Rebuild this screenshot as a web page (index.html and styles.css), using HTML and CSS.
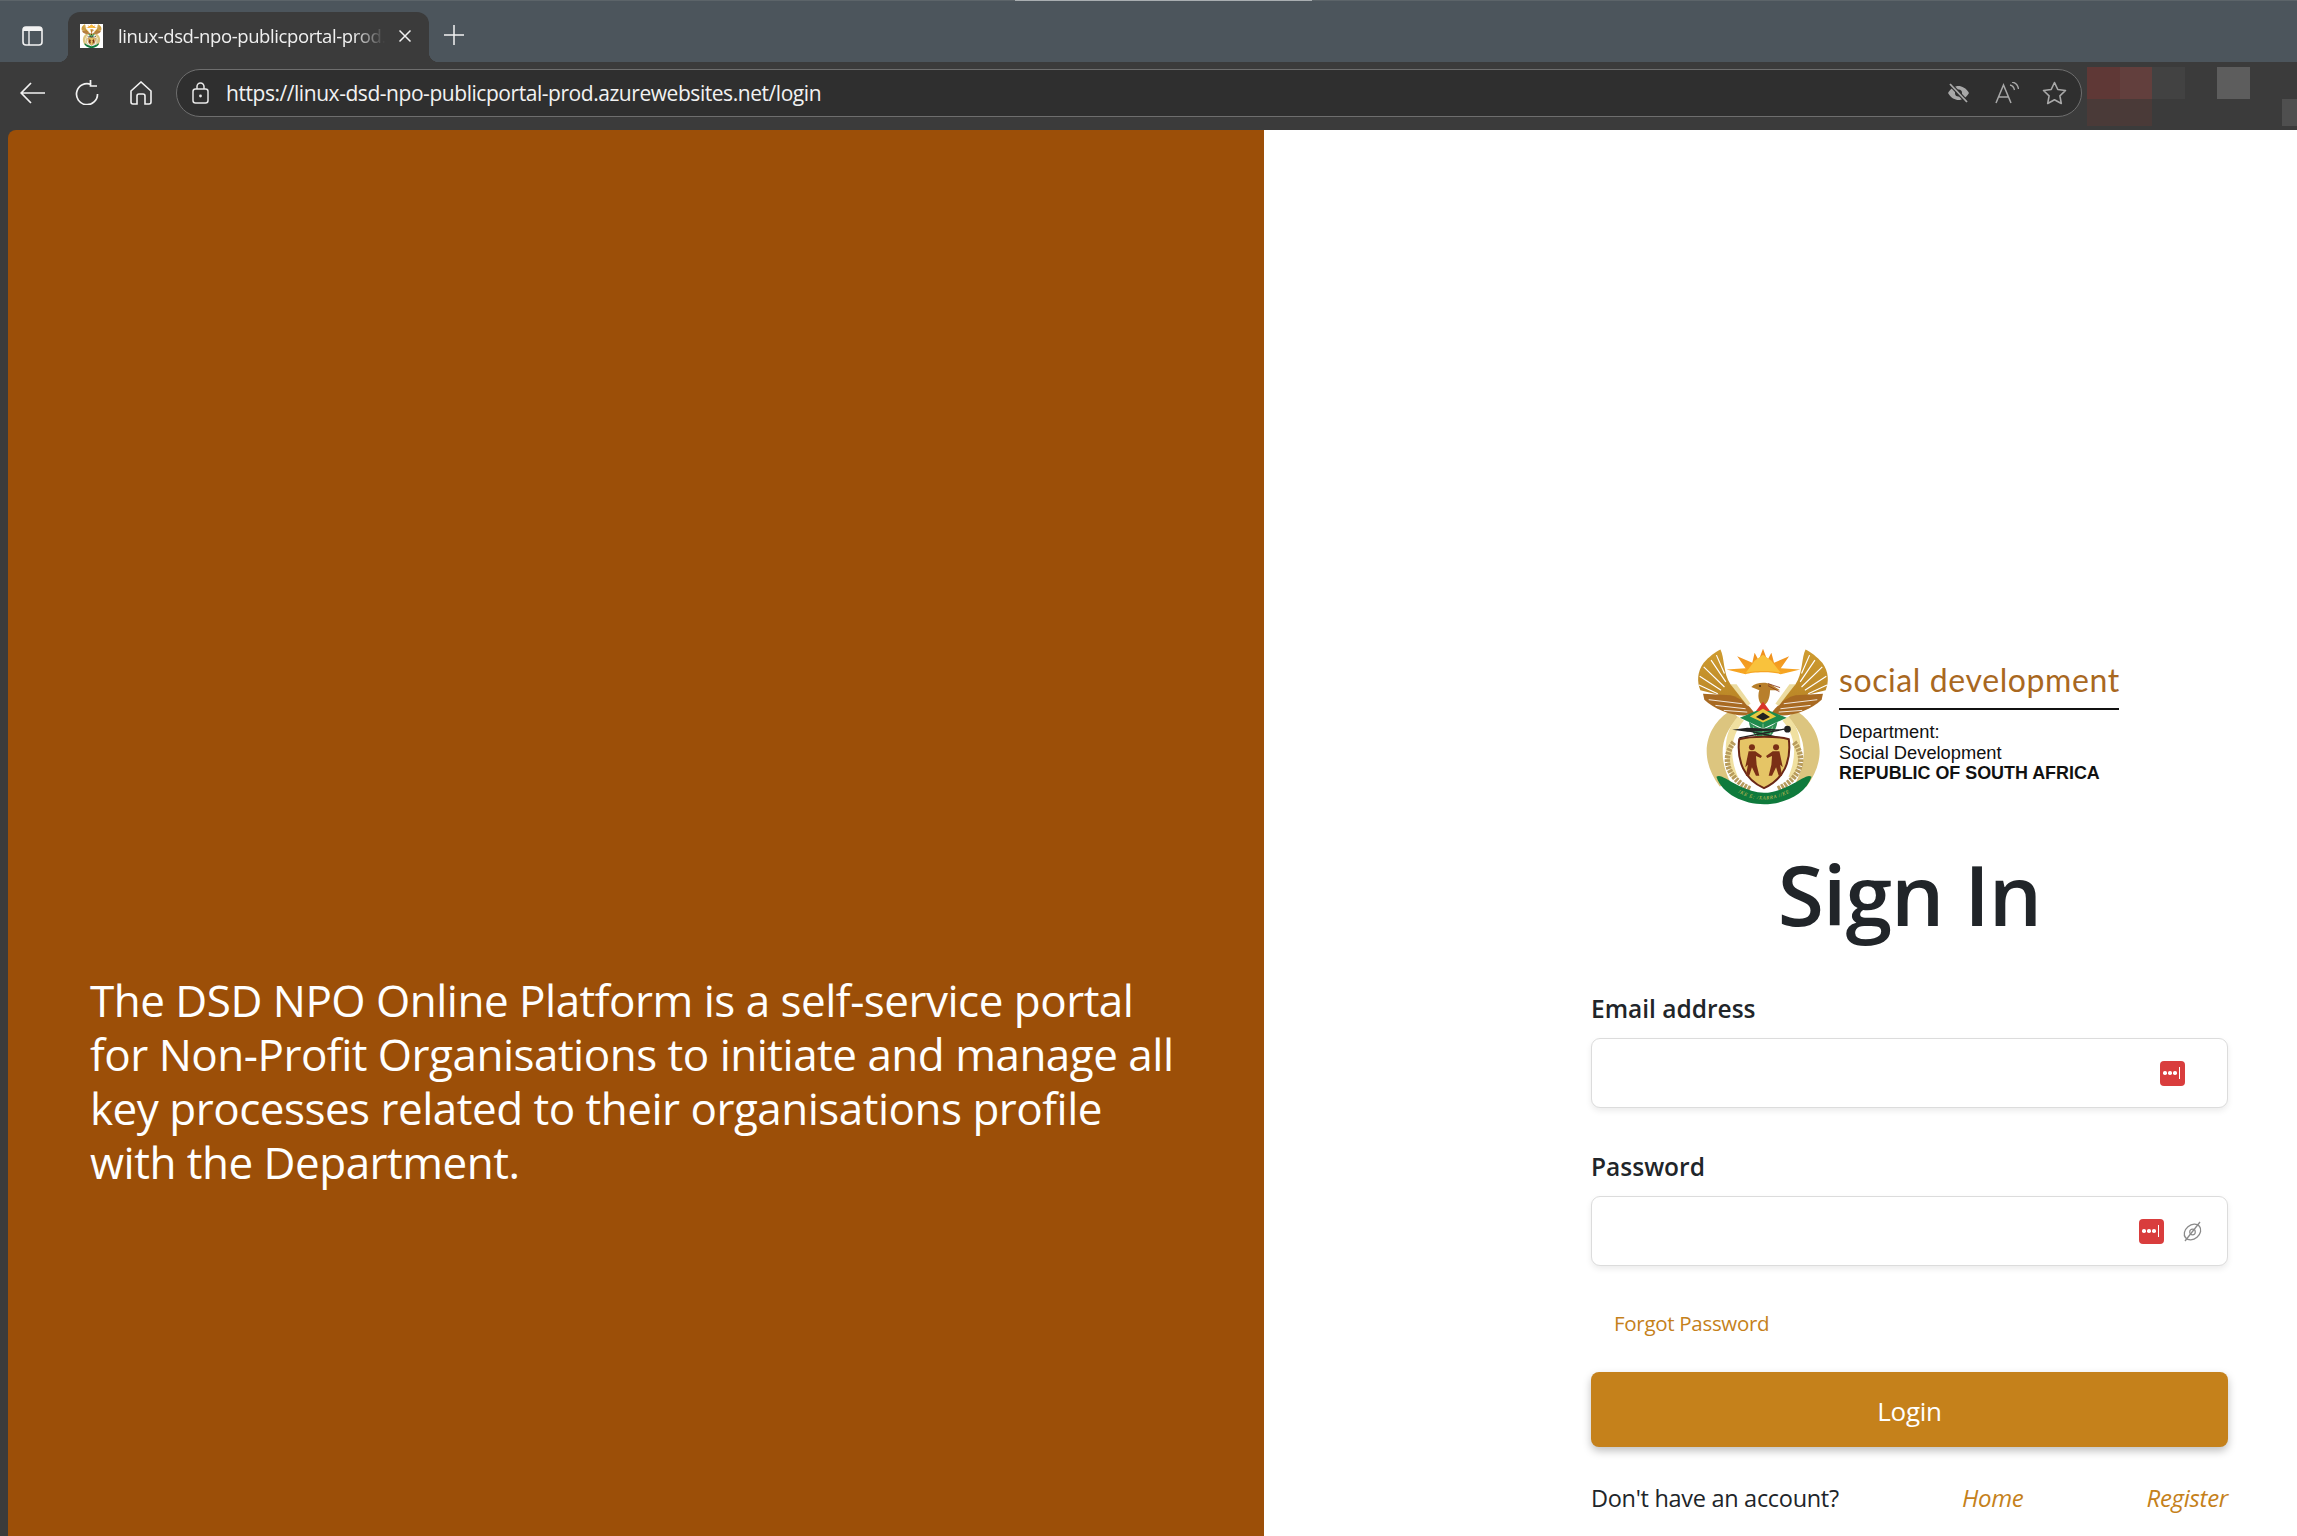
FILE: index.html

```html
<!DOCTYPE html>
<html lang="en">
  <head>
    <meta charset="UTF-8" />
    <title>DSD NPO Online Platform</title>
    <link rel="stylesheet" href="styles.css">
  </head>
  <body>
    <svg class="defs" width="0" height="0">
      <defs>
        <linearGradient id="sun" x1="0" y1="0" x2="0" y2="1">
          <stop offset="0" stop-color="#ee8a1e" />
          <stop offset="1" stop-color="#f7a823" />
        </linearGradient>
        <linearGradient id="wing" x1="0" y1="0" x2="0" y2="1">
          <stop offset="0" stop-color="#cf9c30" />
          <stop offset="1" stop-color="#b98526" />
        </linearGradient>
        <symbol id="arms" viewBox="50 24 394 468">
          <!-- tusks -->
          <path d="M150 210C85 250 45 340 118 437L150 425C112 350 120 280 175 232Z" fill="#dcc57f" />
          <path d="M345 210C410 250 450 340 377 437L345 425C383 350 375 280 320 232Z" fill="#dcc57f" />
          <path d="M172 228C128 275 125 345 158 415L172 408C145 345 150 285 190 240Z" fill="#f0e0a0" />
          <path d="M323 228C367 275 370 345 337 415L323 408C350 345 345 285 305 240Z" fill="#f0e0a0" />
          <!-- upper wings -->
          <path d="M120 28C132 50 128 100 150 132C175 150 190 170 200 190L120 165 60 150C50 125 50 95 70 68 85 50 105 35 120 28Z" fill="url(#wing)" />
          <path d="M374 28C362 50 366 100 344 132C319 150 304 170 294 190L374 165 434 150C444 125 444 95 424 68 409 50 389 35 374 28Z" fill="url(#wing)" />
          <g stroke="#fff" stroke-width="3.5" fill="none">
            <path d="M132 140L70 80M136 125L92 60M132 100L108 45M122 150L58 108M112 160L56 134" />
            <path d="M362 140L424 80M358 125L402 60M362 100L386 45M372 150L436 108M382 160L438 134" />
          </g>
          <!-- sun -->
          <path d="M138 88L195 84 170 48 215 68 222 38 234 60 247 26 260 60 272 38 280 68 325 48 300 84 358 88 300 102C280 94 215 94 195 102Z" fill="url(#sun)" />
          <path d="M195 98L222 62 247 44 272 62 300 98C280 90 215 90 195 98Z" fill="#f9c23c" />
          <!-- lower wings -->
          <path d="M68 160L150 165C180 172 205 195 222 218L190 225C150 225 100 205 72 178Z" fill="#a86a22" />
          <path d="M426 160L344 165C314 172 289 195 272 218L304 225C344 225 394 205 422 178Z" fill="#a86a22" />
          <g stroke="#fff" stroke-width="2.5" fill="none">
            <path d="M85 178L185 190M105 195L195 205M130 210L200 215" />
            <path d="M409 178L309 190M389 195L299 205M364 210L294 215" />
          </g>
          <path d="M150 132L168 132 210 190 200 196Z" fill="#ecdca0" />
          <path d="M344 132L326 132 284 190 294 196Z" fill="#ecdca0" />
          <!-- bird -->
          <path d="M212 140C225 126 255 124 270 132L298 150 268 150C268 170 262 190 248 196 234 190 230 165 236 150Z" fill="#b87f2b" />
          <path d="M262 130L298 142M262 136L296 154" stroke="#8a3d20" stroke-width="2.5" />
          <circle cx="238" cy="137" r="3" fill="#4a2a10" />
          <!-- protea diamond -->
          <path d="M247 184L268 212H226Z" fill="#d9362b" />
          <path d="M178 232L226 212H268L318 232 247 264Z" fill="#1f8a4c" />
          <path d="M208 228L247 205 286 228 247 246Z" fill="#e9c93f" />
          <path d="M226 230L247 216 268 230 247 240Z" fill="#222" />
          <path d="M247 302C225 292 208 270 205 244 222 258 238 262 247 266 258 262 272 258 290 244 287 270 270 292 247 302Z" fill="#2f8f55" />
          <path d="M247 300V250M230 292L218 258M264 292L276 258" stroke="#bfe0b0" stroke-width="2" />
          <!-- spear and kerrie -->
          <path d="M155 268L200 262 318 268 200 274Z" fill="#222" />
          <path d="M176 292L310 266" stroke="#222" stroke-width="4" />
          <path d="M190 268L300 292" stroke="#222" stroke-width="4" />
          <circle cx="320" cy="266" r="10" fill="#222" />
          <!-- wheat -->
          <path d="M160 305C125 350 135 410 210 445" fill="none" stroke="#b79b5c" stroke-width="16" stroke-dasharray="8 3" />
          <path d="M340 305C375 350 365 410 290 445" fill="none" stroke="#b79b5c" stroke-width="16" stroke-dasharray="8 3" />
          <!-- shield -->
          <path d="M176 296C210 286 290 286 324 296 332 360 310 415 250 442 190 415 168 360 176 296Z" fill="#e5c566" stroke="#6a2716" stroke-width="6" />
          <g fill="#7a2f16">
            <circle cx="214" cy="320" r="9" />
            <circle cx="286" cy="320" r="9" />
            <path d="M204 332H224L244 346 240 352 226 346 228 372 236 405H226L214 380 206 405H196L202 372 194 380Z" />
            <path d="M296 332H276L256 346 260 352 274 346 272 372 264 405H274L286 380 294 405H304L298 372 306 380Z" />
          </g>
          <!-- banner -->
          <path d="M108 408C120 400 135 415 175 435 200 447 225 456 250 456 275 456 300 447 325 435 365 415 380 400 392 408 375 460 310 490 250 490 190 490 125 460 108 408Z" fill="#0f7a3c" />
        </symbol>
      </defs>
    </svg>

    <header class="chrome">
      <div class="top-glow"></div>
      <div class="tab-strip">
        <svg class="sidebar-icon" width="21" height="20" viewBox="0 0 21 20">
          <rect x="1" y="1" width="19" height="18" rx="3" fill="none" stroke="#f2f2f2" stroke-width="1.6" />
          <path d="M1 5V4a3 3 0 0 1 3-3h13a3 3 0 0 1 3 3v1z" fill="#f2f2f2" />
          <path d="M7 5v14" stroke="#f2f2f2" stroke-width="1.4" />
        </svg>
        <div class="tab">
          <svg class="favicon" width="23" height="24"><rect width="23" height="24" fill="#fff" /><use href="#arms" width="23" height="24" /></svg>
          <span class="tab-title">linux-dsd-npo-publicportal-prod.azurewebsites.net/login</span>
          <svg class="tab-close" width="14" height="14" viewBox="0 0 14 14"><path d="M1.5 1.5l11 11M12.5 1.5l-11 11" stroke="#f2f2f2" stroke-width="1.5" /></svg>
        </div>
        <svg class="new-tab" width="20" height="20" viewBox="0 0 20 20"><path d="M10 0v20M0 10h20" stroke="#f2f2f2" stroke-width="1.5" /></svg>
      </div>
      <div class="toolbar">
        <svg class="nav-back" width="25" height="22" viewBox="0 0 25 22"><path d="M11 1L1.2 11 11 21M1.5 11H25" fill="none" stroke="#f2f2f2" stroke-width="1.7" /></svg>
        <svg class="nav-reload" width="24" height="25" viewBox="0 0 24 25"><path d="M16 4.5A10.5 10.5 0 1 0 22.5 14" fill="none" stroke="#f2f2f2" stroke-width="1.7" /><path d="M15.5 0v6h6.5" fill="none" stroke="#f2f2f2" stroke-width="1.7" /></svg>
        <svg class="nav-home" width="22" height="24" viewBox="0 0 22 24"><path d="M1 10L11 1l10 9v11a2 2 0 0 1-2 2h-4v-8a2 2 0 0 0-2-2H9a2 2 0 0 0-2 2v8H3a2 2 0 0 1-2-2z" fill="none" stroke="#f2f2f2" stroke-width="1.6" /></svg>
        <div class="address">
          <svg class="lock" width="17" height="22" viewBox="0 0 17 22"><rect x="1" y="7" width="15" height="14" rx="2.5" fill="none" stroke="#e8e8e8" stroke-width="1.5" /><path d="M5 7V4.5a3.5 3.5 0 0 1 7 0V7" fill="none" stroke="#e8e8e8" stroke-width="1.5" /><circle cx="8.5" cy="14" r="1.4" fill="#e8e8e8" /></svg>
          <span class="url">https://linux-dsd-npo-publicportal-prod.azurewebsites.net/login</span>
          <svg class="addr-eye" width="23" height="20" viewBox="0 0 23 20"><path d="M1 10C4 5 8 3 11.5 3S19 5 22 10c-3 5-7 7-10.500 7S4 15 1 10z" fill="#a8a8a8" /><circle cx="11.500" cy="10" r="3.500" fill="#2f2f2f" /><path d="M3 1l17 18" stroke="#2f2f2f" stroke-width="4" /><path d="M3 1l17 18" stroke="#a8a8a8" stroke-width="1.800" /></svg>
          <svg class="addr-read" width="24" height="22" viewBox="0 0 24 22"><path d="M1 21L8.500 3 16 21M4 15h9" fill="none" stroke="#a8a8a8" stroke-width="1.500" /><path d="M15 3c2.500.5 4 2.500 4.500 5M17 0c3.500.6 6 3.500 6.500 7" fill="none" stroke="#a8a8a8" stroke-width="1.300" /></svg>
          <svg class="addr-star" width="25" height="24" viewBox="0 0 25 24"><path d="M12.500 1.500l3.300 7 7.700 1-5.600 5.300 1.400 7.700-6.800-3.800-6.800 3.800 1.400-7.700L1.500 9.500l7.700-1z" fill="none" stroke="#a8a8a8" stroke-width="1.600" stroke-linejoin="round" /></svg>
        </div>
        <div class="blurred">
          <i class="px red"></i><i class="px red2"></i><i class="px grey"></i><i></i><i class="px light"></i><i></i><i></i>
          <i class="px dim"></i><i class="px dim"></i><i></i><i></i><i></i><i></i><i class="px corner"></i>
        </div>
      </div>
    </header>

    <main class="page">
      <section class="hero">
        <p>The DSD NPO Online Platform is a self-service portal<br>for Non-Profit Organisations to initiate and manage all<br>key processes related to their organisations profile<br>with the Department.</p>
      </section>
      <section class="login">
        <div class="logo">
          <svg class="arms" width="132" height="157" viewBox="50 24 394 468">
            <use href="#arms" x="50" y="24" width="394" height="468" />
            <path id="motto" d="M132 425C170 460 210 476 250 476 290 476 330 460 368 425" fill="none" />
            <text class="motto"><textPath href="#motto" startOffset="50%" text-anchor="middle">!KE E: /XARRA //KE</textPath></text>
          </svg>
          <div class="logo-text">
            <div class="logo-name">social development</div>
            <div class="logo-dept">Department:</div>
            <div class="logo-dept">Social Development</div>
            <div class="logo-dept logo-rsa">REPUBLIC OF SOUTH AFRICA</div>
          </div>
        </div>
        <h1>Sign In</h1>
        <form class="login-form">
          <label for="email">Email address</label>
          <div class="field">
            <input type="text" id="email" />
            <div class="field-icons">
              <span class="pw-badge"><b></b><b></b><b></b><em></em></span>
            </div>
          </div>
          <label for="password">Password</label>
          <div class="field">
            <input type="password" id="password" />
            <div class="field-icons with-eye">
              <span class="pw-badge"><b></b><b></b><b></b><em></em></span>
              <svg width="21" height="21" viewBox="0 0 21 21"><ellipse cx="10.500" cy="11" rx="9" ry="7" transform="rotate(-40 10.500 11)" fill="none" stroke="#8a8a8a" stroke-width="1.300" /><circle cx="10.500" cy="11" r="2.800" fill="none" stroke="#8a8a8a" stroke-width="1.200" /><path d="M3 20L18 1" stroke="#8a8a8a" stroke-width="1.300" /></svg>
            </div>
          </div>
          <a class="forgot" href="#">Forgot Password</a>
          <button type="button">Login</button>
          <div class="form-foot">
            <span>Don't have an account?</span>
            <a href="#">Home</a>
            <a href="#">Register</a>
          </div>
        </form>
      </section>
    </main>
  </body>
</html>
```

FILE: styles.css

```css
html, body {
  margin: 0;
  padding: 0;
  height: 100%;
}
body {
  height: 1536px;
  overflow: hidden;
  display: flex;
  flex-direction: column;
  background: #3b3b3b;
  font-family: "Open Sans", "Noto Sans", sans-serif;
}
.defs {
  position: absolute;
}
.motto {
  font-family: "Liberation Serif", serif;
  font-size: 15px;
  font-style: italic;
  fill: #d9c15a;
  letter-spacing: 2px;
}

/* browser chrome */
.chrome {
  position: relative;
  flex: none;
}
.top-glow {
  position: absolute;
  top: 0;
  left: 1015px;
  width: 297px;
  height: 1px;
  background: #a9aeb1;
}
.tab-strip {
  height: 62px;
  box-sizing: border-box;
  padding-left: 22px;
  display: flex;
  align-items: flex-end;
  background: #4c555c;
  border-top: 1px solid #5c6469;
}
.sidebar-icon {
  align-self: flex-start;
  margin-top: 25px;
  margin-right: 25px;
}
.tab {
  position: relative;
  width: 361px;
  height: 50px;
  box-sizing: border-box;
  padding: 0 0 3px 12px;
  display: flex;
  align-items: center;
  background: #3b3b3b;
  border-radius: 12px 12px 0 0;
}
.tab::before,
.tab::after {
  content: "";
  position: absolute;
  bottom: 0;
  width: 10px;
  height: 10px;
}
.tab::before {
  left: -10px;
  background: radial-gradient(circle at 0 0, transparent 10px, #3b3b3b 10.500px);
}
.tab::after {
  right: -10px;
  background: radial-gradient(circle at 100% 0, transparent 10px, #3b3b3b 10.500px);
}
.favicon {
  flex: none;
}
.tab-title {
  width: 267px;
  margin-left: 15px;
  overflow: hidden;
  white-space: nowrap;
  font-size: 18.500px;
  letter-spacing: -0.400px;
  color: #f0f0f0;
  -webkit-mask-image: linear-gradient(to right, #000 88%, transparent);
  mask-image: linear-gradient(to right, #000 88%, transparent);
}
.tab-close {
  flex: none;
  margin-left: 13px;
}
.new-tab {
  align-self: flex-start;
  margin-top: 24px;
  margin-left: 15px;
}
.toolbar {
  height: 68px;
  box-sizing: border-box;
  padding: 0 0 7px 20px;
  display: flex;
  align-items: center;
}
.nav-back { margin-right: 30px; flex: none; }
.nav-reload { margin-right: 31px; flex: none; }
.nav-home { margin-right: 24px; flex: none; }
.address {
  flex: none;
  width: 1906px;
  height: 48px;
  box-sizing: border-box;
  padding: 0 14px 0 15px;
  display: flex;
  align-items: center;
  background: #2f2f2f;
  border: 1.500px solid #6e6e6e;
  border-radius: 24px;
}
.url {
  margin-left: 17px;
  font-size: 21px;
  letter-spacing: -0.450px;
  color: #f2f2f2;
  white-space: nowrap;
}
.addr-eye { margin-left: auto; }
.addr-read { margin-left: 25px; }
.addr-star { margin-left: 23px; }
.blurred {
  margin-left: 5px;
  align-self: flex-start;
  display: grid;
  grid-template-columns: repeat(6, 32.500px) 16px;
  grid-template-rows: 32px 27px;
  padding-top: 5px;
}
.px.red { background: #5f3836; }
.px.red2 { background: #623f3d; }
.px.grey { background: #424242; }
.px.light { background: #5d5d5d; }
.px.dim { background: #4a3a38; }
.px.corner { background: #4f4f4f; }

/* page */
.page {
  flex: 1;
  display: flex;
  min-height: 0;
  overflow: hidden;
  background: linear-gradient(to right, #3b3b3b 24px, #fff 24px);
}
.hero {
  width: 1256px;
  margin-left: 8px;
  box-sizing: border-box;
  padding: 843px 60px 0 82px;
  background: #9c4f08;
  border-top-left-radius: 8px;
}
.hero p {
  margin: 0;
  font-size: 44px;
  line-height: 54px;
  letter-spacing: -0.500px;
  color: #fff;
  white-space: nowrap;
}
.login {
  flex: 1;
  box-sizing: border-box;
  padding-top: 518px;
  padding-left: 327px;
}
.logo {
  width: 637px;
  height: 160px;
  display: flex;
}
.arms {
  flex: none;
  margin-left: 106px;
}
.logo-text {
  width: 292px;
  margin-left: 10px;
  font-family: "Liberation Sans", Arial, sans-serif;
  color: #111;
}
.logo-name {
  width: 280px;
  padding: 14px 0 10px 0;
  margin-bottom: 12px;
  border-bottom: 2.500px solid #111;
  font-family: Lato, sans-serif;
  font-size: 32px;
  line-height: 36px;
  letter-spacing: 0.600px;
  color: #a9681f;
  white-space: nowrap;
}
.logo-dept {
  font-size: 18.300px;
  line-height: 20.500px;
  white-space: nowrap;
}
.logo-rsa {
  font-size: 17.900px;
  font-weight: bold;
}
h1 {
  width: 637px;
  margin: 33px 0 0;
  text-align: center;
  font-size: 84px;
  line-height: 106px;
  font-weight: 600;
  letter-spacing: -1px;
  color: #212529;
}
.login-form {
  width: 637px;
  margin-top: 46px;
  display: flex;
  flex-direction: column;
}
.login-form label {
  font-size: 24.500px;
  font-weight: 600;
  line-height: 32px;
  color: #212529;
  margin-bottom: 13px;
}
.field {
  position: relative;
  margin-bottom: 43px;
}
.field input {
  display: block;
  width: 100%;
  height: 70px;
  box-sizing: border-box;
  background: #fff;
  border: 1.500px solid #dcdcdc;
  border-radius: 9px;
  outline: none;
  box-shadow: 0 3px 6px rgba(0, 0, 0, 0.08);
}
.field-icons {
  position: absolute;
  top: 0;
  right: 43px;
  height: 70px;
  display: flex;
  align-items: center;
  gap: 18px;
}
.field-icons.with-eye {
  right: 25px;
}
.pw-badge {
  width: 25px;
  height: 25px;
  box-sizing: border-box;
  padding-left: 3px;
  display: flex;
  align-items: center;
  gap: 1.500px;
  background: #d93d3d;
  border-radius: 4px;
}
.pw-badge b {
  width: 3.500px;
  height: 3.500px;
  border-radius: 50%;
  background: #fff;
}
.pw-badge em {
  width: 1px;
  height: 12px;
  margin-left: 1px;
  background: #fff;
}
.forgot {
  margin: -1px 0 0 23px;
  font-size: 20.500px;
  line-height: 30px;
  letter-spacing: -0.300px;
  color: #c5811b;
  text-decoration: none;
}
button {
  width: 637px;
  height: 75px;
  margin-top: 34px;
  padding-top: 4px;
  border: 0;
  border-radius: 8px;
  background: #c5811b;
  color: #fff;
  font-family: inherit;
  font-size: 26px;
  letter-spacing: -0.300px;
  box-shadow: 0 4px 8px rgba(0, 0, 0, 0.25);
}
.form-foot {
  margin-top: 35px;
  display: flex;
  justify-content: space-between;
  font-size: 23.500px;
  line-height: 32px;
  letter-spacing: -0.300px;
  color: #212529;
}
.form-foot a {
  font-size: 24px;
  font-style: italic;
  color: #c5811b;
  text-decoration: none;
}
```
